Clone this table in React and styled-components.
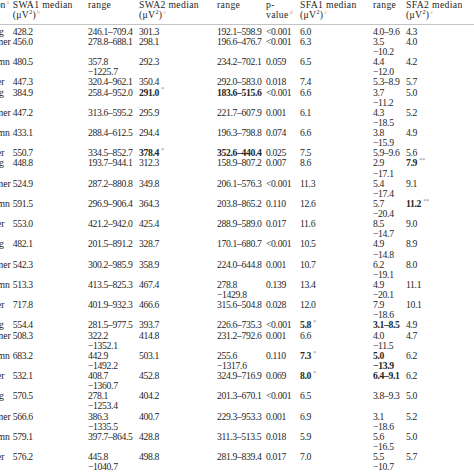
import styled, { createGlobalStyle } from "styled-components";

const GlobalStyle = createGlobalStyle`
  html, body {
    margin: 0;
    padding: 0;
    background: #fff;
    overflow: hidden;
  }
`;

const widths = [34.7, 75.3, 51, 78, 49, 34, 73, 33, 80];
const template = widths.map((w) => `${w}px`).join(" ");

const Frame = styled.div`
  width: 474px;
  height: 474px;
  overflow: hidden;
  background: #fff;
`;

const Sheet = styled.div`
  margin-left: -22px;
  width: max-content;
  font-family: "Liberation Serif", "Times New Roman", serif;
  font-size: 9.7px;
  line-height: 10.13px;
  letter-spacing: -0.35px;
  color: #262626;
`;

const Row = styled.div`
  display: grid;
  grid-template-columns: ${template};
  align-items: start;
`;

const HeadRow = styled(Row)`
  padding-bottom: 3.5px;
  border-bottom: 1px solid #c4c4c4;
  margin-bottom: 2px;
  letter-spacing: 0.35px;
`;

const Cell = styled.div`
  white-space: pre-line;
  font-weight: ${(p) => (p.$bold ? "bold" : "normal")};
`;

const Label = styled(Cell)`
  letter-spacing: 0;
`;

const Note = styled.sup`
  font-size: 6px;
  line-height: 0;
  color: #ef9a55;
  margin-left: 1px;
  font-weight: normal;
`;

const Star = styled.sup`
  font-size: 6.5px;
  line-height: 0;
  color: #8a8a8a;
  margin-left: 2px;
  font-weight: normal;
`;

const Power = styled.sup`
  font-size: 6px;
  line-height: 0;
`;

const Unit = ({ note }) => (
  <>
    {"\n"}(μV<Power>2</Power>)<Note>{note}</Note>
  </>
);

const seasons = ["Spring", "Summer", "Autumn", "Winter"];

const b = (v, star) => ({ v, bold: true, star });

const rows = [
  ["428.2", "246.1–709.4", "301.3", "192.1–598.9", "<0.001", "6.0", "4.0–9.6", "4.3"],
  ["456.0", "278.8–688.1", "298.1", "196.6–476.7", "<0.001", "6.3", "3.5\n−10.2", "4.0"],
  ["480.5", "357.8\n−1225.7", "292.3", "234.2–702.1", "0.059", "6.5", "4.4\n−12.0", "4.2"],
  ["447.3", "320.4–962.1", "350.4", "292.0–583.0", "0.018", "7.4", "5.3–8.9", "5.7"],
  ["384.9", "258.4–952.0", b("291.0", "*"), b("183.6–515.6"), "<0.001", "6.6", "3.7\n−11.2", "5.0"],
  ["447.2", "313.6–595.2", "295.9", "221.7–607.9", "0.001", "6.1", "4.3\n−18.5", "5.2"],
  ["433.1", "288.4–612.5", "294.4", "196.3–798.8", "0.074", "6.6", "3.8\n−15.9", "4.9"],
  ["550.7", "334.5–852.7", b("378.4", "*"), b("352.6–440.4"), "0.025", "7.5", "5.9–9.6", "5.6"],
  ["448.8", "193.7–944.1", "312.3", "158.9–807.2", "0.007", "8.6", "2.9\n−17.1", b("7.9", "**")],
  ["524.9", "287.2–880.8", "349.8", "206.1–576.3", "<0.001", "11.3", "5.4\n−17.4", "9.1"],
  ["591.5", "296.9–906.4", "364.3", "203.8–865.2", "0.110", "12.6", "5.7\n−20.4", b("11.2", "**")],
  ["553.0", "421.2–942.0", "425.4", "288.9–589.0", "0.017", "11.6", "8.5\n−14.7", "9.0"],
  ["482.1", "201.5–891.2", "328.7", "170.1–680.7", "<0.001", "10.5", "4.9\n−14.8", "8.9"],
  ["542.3", "300.2–985.9", "358.9", "224.0–644.8", "0.001", "10.7", "6.2\n−19.1", "8.0"],
  ["513.3", "413.5–825.3", "467.4", "278.8\n−1429.8", "0.139", "13.4", "4.9\n−20.1", "11.1"],
  ["717.8", "401.9–932.3", "466.6", "315.6–504.8", "0.028", "12.0", "7.9\n−18.6", "10.1"],
  ["554.4", "281.5–977.5", "393.7", "226.6–735.3", "<0.001", b("5.8", "*"), b("3.1–8.5"), "4.9"],
  ["508.3", "322.2\n−1352.1", "414.8", "231.2–792.6", "0.001", "6.6", "4.0\n−11.5", "4.7"],
  ["683.2", "442.9\n−1492.2", "503.1", "255.6\n−1317.6", "0.110", b("7.3", "*"), b("5.0\n−13.9"), "6.2"],
  ["532.1", "408.7\n−1360.7", "452.8", "324.9–716.9", "0.069", b("8.0", "*"), b("6.4–9.1"), "6.2"],
  ["570.5", "278.1\n−1253.4", "404.2", "201.3–670.1", "<0.001", "6.5", "3.8–9.3", "5.0"],
  ["566.6", "386.3\n−1335.5", "400.7", "229.3–953.3", "0.001", "6.9", "3.1\n−18.6", "5.2"],
  ["579.1", "397.7–864.5", "428.8", "311.3–513.5", "0.018", "5.9", "5.6\n−16.5", "5.0"],
  ["576.2", "445.8\n−1040.7", "498.8", "281.9–839.4", "0.017", "7.0", "5.5\n−10.7", "5.7"],
];

function Value({ cell }) {
  if (typeof cell === "string") return <Cell>{cell}</Cell>;
  return (
    <Cell $bold={cell.bold}>
      {cell.v}
      {cell.star && <Star>{cell.star}</Star>}
    </Cell>
  );
}

export default function App() {
  return (
    <Frame>
      <GlobalStyle />
      <Sheet>
        <HeadRow>
          <Label>
            Season<Note>a</Note>
          </Label>
          <Cell>
            SWA1 median
            <Unit note="b" />
          </Cell>
          <Cell>range</Cell>
          <Cell>
            SWA2 median
            <Unit note="c" />
          </Cell>
          <Cell>range</Cell>
          <Cell>
            {"p-\nvalue"}
            <Note>d</Note>
          </Cell>
          <Cell>
            SFA1 median
            <Unit note="c" />
          </Cell>
          <Cell>range</Cell>
          <Cell>
            SFA2 median
            <Unit note="c" />
          </Cell>
        </HeadRow>
        {rows.map((r, i) => (
          <Row key={i}>
            <Label>{seasons[i % 4]}</Label>
            {r.map((c, j) => (
              <Value key={j} cell={c} />
            ))}
          </Row>
        ))}
      </Sheet>
    </Frame>
  );
}
